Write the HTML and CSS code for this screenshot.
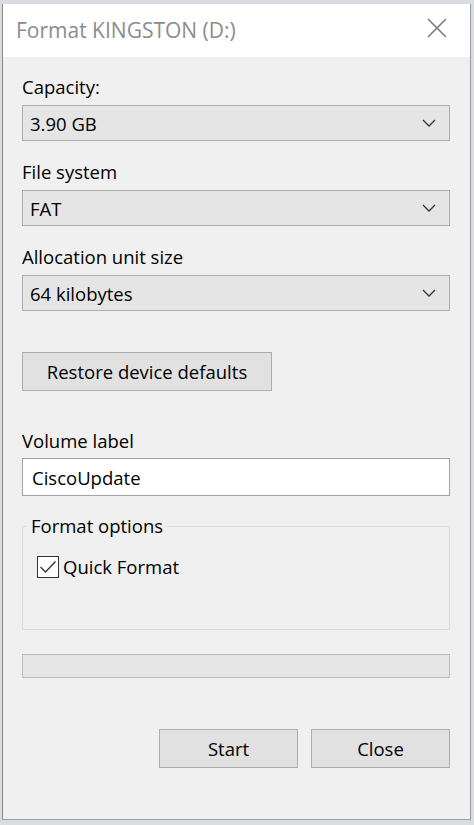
FILE: index.html
```html
<!DOCTYPE html>
<html>
<head>
<meta charset="utf-8">
<link rel="stylesheet" href="styles.css">
</head>
<body>
<div class="desk">
  <div class="window">
    <div class="titlebar">
      <span class="title">Format KINGSTON (D:)</span>
      <svg class="close" width="20" height="20" viewBox="0 0 20 20"><path d="M1 1L19 19M19 1L1 19" stroke="#7a7a7a" stroke-width="1.6" fill="none"/></svg>
    </div>
    <div class="content">
      <div class="label l1">Capacity:</div>
      <div class="select"><span>3.90 GB</span><svg width="14" height="8" viewBox="0 0 14 8"><path d="M1 1L7 7L13 1" stroke="#333" stroke-width="1.3" fill="none"/></svg></div>
      <div class="label">File system</div>
      <div class="select"><span>FAT</span><svg width="14" height="8" viewBox="0 0 14 8"><path d="M1 1L7 7L13 1" stroke="#333" stroke-width="1.3" fill="none"/></svg></div>
      <div class="label">Allocation unit size</div>
      <div class="select"><span>64 kilobytes</span><svg width="14" height="8" viewBox="0 0 14 8"><path d="M1 1L7 7L13 1" stroke="#333" stroke-width="1.3" fill="none"/></svg></div>
      <div class="btn restore">Restore device defaults</div>
      <div class="label vol">Volume label</div>
      <div class="input">CiscoUpdate</div>
      <div class="group">
        <div class="legend">Format options</div>
        <div class="check-row">
          <span class="box"><svg width="18" height="14" viewBox="0 0 18 14"><path d="M1.5 7L6.5 12L16.5 1.5" stroke="#333" stroke-width="1.3" fill="none"/></svg></span>
          <span>Quick Format</span>
        </div>
      </div>
      <div class="progress"></div>
      <div class="actions">
        <div class="btn act">Start</div>
        <div class="btn act">Close</div>
      </div>
    </div>
  </div>
  <div class="under">&nbsp;</div>
</div>
</body>
</html>
```
FILE: styles.css
```css
html, body {
  margin: 0;
  padding: 0;
}
body {
  width: 474px;
  height: 825px;
  overflow: hidden;
  background: #d9dde2;
  font-family: "Open Sans", "Noto Sans", sans-serif;
  color: #000;
}
.desk {
  padding: 4px 3px 0 2px;
  height: 821px;
  display: flex;
  flex-direction: column;
}
.window {
  background: #f0f0f0;
  border-left: 1px solid #8a8a8a;
  border-right: 1px solid #9a9a9a;
  border-bottom: 1px solid #a0a0a0;
  height: 815px;
  display: flex;
  flex-direction: column;
}
.titlebar {
  background: #fff;
  height: 53px;
  display: flex;
  align-items: center;
  justify-content: space-between;
  padding: 0 23px 0 13px;
}
.title {
  font-size: 21px;
  color: #8c8c8c;
  margin-top: -2px;
}
.close {
  margin-top: -6px;
}
.content {
  padding: 0 20px 0 19px;
  display: flex;
  flex-direction: column;
  font-size: 18.5px;
}
.label {
  line-height: 24px;
  margin-top: 19px;
  margin-bottom: 6px;
}
.label.l1 {
  margin-top: 18px;
}
.select {
  height: 34px;
  background: #e5e5e5;
  border: 1px solid #adadad;
  display: flex;
  align-items: center;
  justify-content: space-between;
  padding: 0 13px 0 7px;
}
.btn {
  background: #e1e1e1;
  border: 1px solid #adadad;
  display: flex;
  align-items: center;
  justify-content: center;
}
.restore {
  width: 248px;
  height: 37px;
  margin-top: 41px;
}
.label.vol {
  margin-top: 38px;
  margin-bottom: 5px;
}
.input {
  height: 36px;
  background: #fff;
  border: 1px solid #a5a5a5;
  display: flex;
  align-items: center;
  padding: 0 9px;
}
.group {
  margin-top: 30px;
  height: 102px;
  border: 1px solid #dcdcdc;
  position: relative;
  padding: 0 0 0 14px;
}
.legend {
  position: absolute;
  top: -13px;
  left: 4px;
  background: #f0f0f0;
  padding: 0 3px 0 4px;
  line-height: 24px;
}
.check-row {
  margin-top: 27px;
  display: flex;
  align-items: center;
  gap: 4px;
}
.box {
  width: 20px;
  height: 20px;
  border: 1.5px solid #333;
  background: #fff;
  display: flex;
  align-items: center;
  justify-content: center;
}
.progress {
  margin-top: 24px;
  height: 22px;
  background: #e6e6e6;
  border: 1px solid #bcbcbc;
}
.actions {
  margin-top: 51px;
  display: flex;
  justify-content: flex-end;
  gap: 13px;
}
.act {
  width: 137px;
  height: 37px;
}
.under {
  height: 5px;
}
```
